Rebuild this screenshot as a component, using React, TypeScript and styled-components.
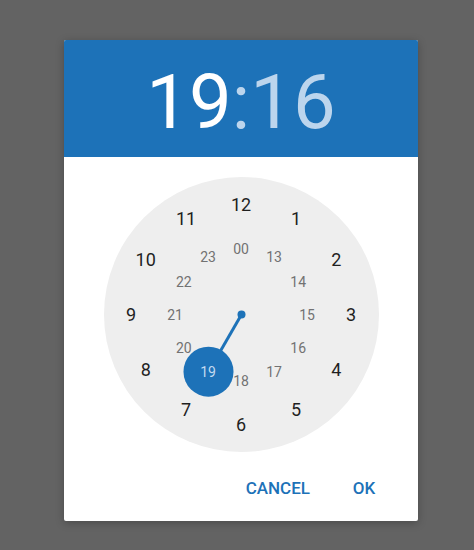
import React from 'react';
import styled, { createGlobalStyle } from 'styled-components';

const GlobalStyle = createGlobalStyle`
  html, body {
    margin: 0;
    padding: 0;
    background: #636363;
    font-family: Roboto, 'Noto Sans', 'Liberation Sans', sans-serif;
  }
`;

const FACE = 275;
const C = FACE / 2;
const OUTER_R = 110;
const INNER_R = 66;

const outerHours = [12, 1, 2, 3, 4, 5, 6, 7, 8, 9, 10, 11];
const innerHours = ['00', '13', '14', '15', '16', '17', '18', '19', '20', '21', '22', '23'];

const selectedIndex = 7; // 19

const polar = (index: number, r: number) => {
  const a = (index * 30 * Math.PI) / 180;
  return { x: C + r * Math.sin(a), y: C - r * Math.cos(a) };
};

const App = () => {
  const sel = polar(selectedIndex, INNER_R);

  return (
    <>
      <GlobalStyle />
      <Page>
        <Dialog>
          <Header>
            <TimeText>
              <Active>19</Active>
              <Muted>:</Muted>
              <Muted>16</Muted>
            </TimeText>
          </Header>

          <ClockFace>
            <HandLayer width={FACE} height={FACE} viewBox={`0 0 ${FACE} ${FACE}`}>
              <line x1={C} y1={C} x2={sel.x} y2={sel.y} stroke="#1d72b8" strokeWidth={3} />
              <circle cx={C} cy={C} r={4} fill="#1d72b8" />
              <circle cx={sel.x} cy={sel.y} r={25} fill="#1d72b8" />
            </HandLayer>

            {outerHours.map((h, i) => {
              const p = polar(i, OUTER_R);
              return (
                <OuterLabel key={h} style={{ left: p.x, top: p.y }}>
                  {h}
                </OuterLabel>
              );
            })}

            {innerHours.map((h, i) => {
              const p = polar(i, INNER_R);
              return (
                <InnerLabel key={h} $selected={i === selectedIndex} style={{ left: p.x, top: p.y }}>
                  {h}
                </InnerLabel>
              );
            })}
          </ClockFace>

          <Actions>
            <TextButton>CANCEL</TextButton>
            <TextButton>OK</TextButton>
          </Actions>
        </Dialog>
      </Page>
    </>
  );
};

const Page = styled.div`
  width: 474px;
  height: 550px;
  padding: 40px 0 0 64px;
  box-sizing: border-box;
`;

const Dialog = styled.div`
  width: 354px;
  height: 481px;
  background: #ffffff;
  border-radius: 2px;
  overflow: hidden;
  box-shadow: 0 2px 8px rgba(0, 0, 0, 0.25);
  display: flex;
  flex-direction: column;
`;

const Header = styled.div`
  height: 117px;
  background: #1d72b8;
  display: flex;
  align-items: center;
  justify-content: center;
  padding-top: 6px;
  box-sizing: border-box;
`;

const TimeText = styled.div`
  font-size: 76px;
  line-height: 1;
  font-weight: 400;
  letter-spacing: 0;
`;

const Active = styled.span`
  color: #ffffff;
`;

const Muted = styled.span`
  color: #bcd5ed;
`;

const ClockFace = styled.div`
  position: relative;
  width: ${FACE}px;
  height: ${FACE}px;
  margin: 20px auto 0;
  border-radius: 50%;
  background: #eeeeee;
`;

const HandLayer = styled.svg`
  position: absolute;
  left: 0;
  top: 0;
`;

const OuterLabel = styled.div`
  position: absolute;
  transform: translate(-50%, -50%);
  font-size: 18px;
  line-height: 1;
  color: #1f1f1f;
`;

const InnerLabel = styled.div<{ $selected: boolean }>`
  position: absolute;
  transform: translate(-50%, -50%);
  font-size: 14px;
  line-height: 1;
  color: ${p => (p.$selected ? '#c3daf0' : '#727272')};
`;

const Actions = styled.div`
  display: flex;
  justify-content: flex-end;
  gap: 14px;
  margin-top: 18px;
  padding: 0 22px 0 0;
`;

const TextButton = styled.button`
  min-width: 64px;
  height: 36px;
  padding: 0 8px;
  border: none;
  background: none;
  font-family: Roboto, 'Noto Sans', 'Liberation Sans', sans-serif;
  font-size: 17px;
  font-weight: 500;
  color: #1d72b8;
  cursor: pointer;
`;

export default App;
